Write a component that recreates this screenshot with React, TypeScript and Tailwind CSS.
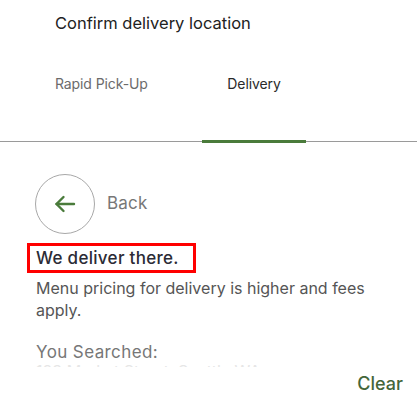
import React from 'react';

const BackArrow = () => (
  <svg width="24" height="24" viewBox="0 0 24 24" fill="none" stroke="#4a7b3b" strokeWidth="2.4" strokeLinecap="round" strokeLinejoin="round">
    <path d="M21 12H3.5" />
    <path d="M10.5 5 3.5 12l7 7" />
  </svg>
);

const App: React.FC = () => {
  return (
    <div className="w-[417px] h-[420px] bg-white overflow-hidden font-['Inter',sans-serif]">
      {/* header */}
      <div className="h-[62px] pt-[13px] pl-[55px]">
        <h1 className="text-[16.5px] leading-[20px] text-[#222] font-normal">Confirm delivery location</h1>
      </div>

      {/* tabs */}
      <div className="flex h-[80px] border-b border-[#9a9a9a]">
        <div className="ml-[55px] w-[147px] pt-[14px] text-[14px] leading-[16px] text-[#6b6b6b] tracking-[-0.1px]">
          Rapid Pick-Up
        </div>
        <div className="relative w-[104px] pt-[14px] text-center text-[14px] leading-[16px] text-[#2a2a2a] tracking-[-0.1px]">
          Delivery
          <span className="absolute left-0 right-0 bottom-[-2px] h-[3px] bg-[#4a7b3b]" />
        </div>
      </div>

      {/* body */}
      <div className="pl-[36px] pr-[36px]">
        <div className="flex items-center mt-[32px] -ml-px">
          <div className="w-[60px] h-[60px] rounded-full border border-[#a8a8a8] flex items-center justify-center">
            <BackArrow />
          </div>
          <span className="ml-[12px] text-[17px] text-[#777] tracking-[0.2px]">Back</span>
        </div>

        <div className="mt-[9px] -ml-[9px] w-[169px] h-[30px] border-[3px] border-[#ff0000] pl-[6px] flex items-center">
          <span className="text-[17px] leading-[20px] font-medium text-[#2b2b35] tracking-[0.3px]">We deliver there.</span>
        </div>

        <p className="mt-[4px] text-[16px] leading-[22px] text-[#555]">
          Menu pricing for delivery is higher and fees apply.
        </p>

        <p className="mt-[20px] text-[17px] leading-[22px] text-[#777] tracking-[0.4px]">You Searched:</p>
        <div className="h-[4px] overflow-hidden">
          <p className="text-[16px] leading-[16px] text-[#e6e6e6]">123 Market Street, Seattle WA</p>
        </div>
      </div>

      <div className="flex justify-end pr-[14px] mt-[6px]">
        <button className="text-[18px] leading-[22px] font-medium text-[#44663a]">Clear</button>
      </div>
    </div>
  );
};

export default App;
